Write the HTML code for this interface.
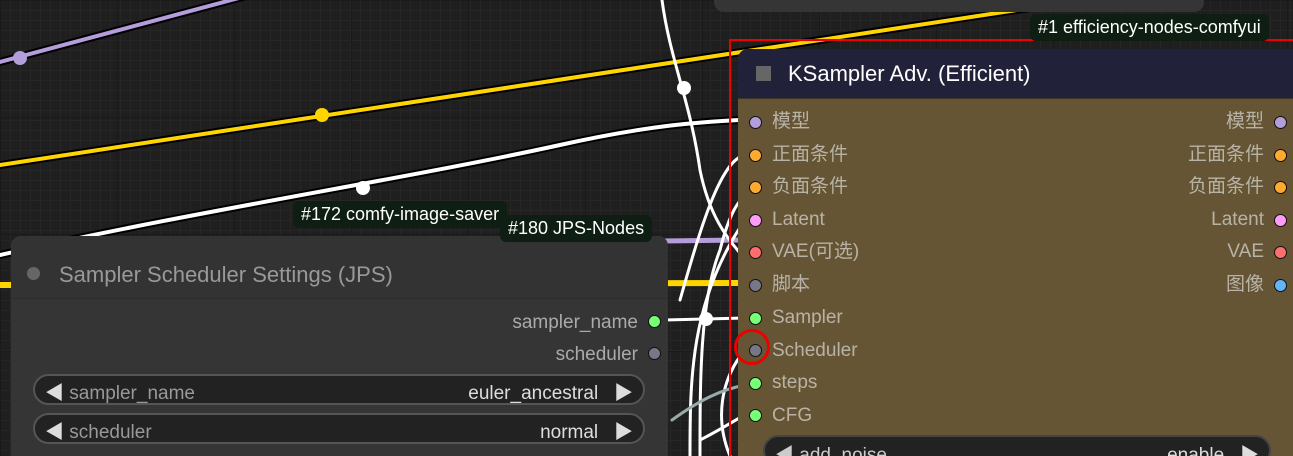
<!DOCTYPE html>
<html style="width:1293px;height:456px;overflow:hidden"><head><meta charset="utf-8"><style>
body{margin:0;width:1293px;height:456px;overflow:hidden;background:#1f1f1f;font-family:"Liberation Sans","Noto Sans CJK SC",sans-serif;position:relative}
.grid{position:absolute;inset:0;background-image:linear-gradient(#181818 1px,transparent 1px),linear-gradient(90deg,#181818 1px,transparent 1px),linear-gradient(#2a2a2a 1px,transparent 1px),linear-gradient(90deg,#2a2a2a 1px,transparent 1px);background-size:117px 117px,117px 117px,10px 10px,10px 10px;opacity:.7}
.abs{position:absolute}
.tag{position:absolute;background:#0f1e12;color:#fff;font-size:18px;padding:3px 8px;border-radius:6px;white-space:nowrap}
.dot{position:absolute;width:11px;height:11px;border-radius:50%;border:1px solid #111}
.lbl{position:absolute;color:#b8b3a6;font-size:19px;line-height:22px}
.w{position:absolute;height:31px;border:2px solid #555;border-radius:16px;background:#222;color:#999;font-size:19px;box-sizing:border-box}
</style></head><body>
<div class="grid"></div>
<svg class="abs" width="1293" height="456" style="left:0;top:0">
<g fill="none" stroke-linecap="round">
<path d="M0 62 L250 -5" stroke="#000" stroke-width="8"/><path d="M0 62 L250 -5" stroke="#b39ddb" stroke-width="4"/>
<path d="M0 165 L1030 8" stroke="#000" stroke-width="8"/><path d="M0 165 L1030 8" stroke="#ffd500" stroke-width="4"/>
<path d="M0 255 C200 210 400 180 560 145 C650 125 700 122 740 120" stroke="#000" stroke-width="8"/><path d="M0 255 C200 210 400 180 560 145 C650 125 700 122 740 120" stroke="#fff" stroke-width="4"/>
<path d="M0 285 L740 283" stroke="#ffd500" stroke-width="6"/>
<path d="M520 243 L740 240" stroke="#b39ddb" stroke-width="5"/>
<g stroke="#fff" stroke-width="3">
<path d="M662 0 C670 60 690 100 700 170 C712 230 740 250 745 260"/>
<path d="M700 456 C700 380 700 300 720 250 C730 210 740 200 745 195"/>
<path d="M680 300 C700 230 720 160 745 155"/>
<path d="M690 456 C690 380 690 300 745 220"/>
<path d="M665 320 L745 318"/>
<path d="M730 456 C715 420 720 380 745 350"/>
<path d="M700 440 C720 430 735 420 745 415"/>
</g>
<path d="M672 420 C700 400 720 390 745 385" stroke="#9aa" stroke-width="3"/>
</g>
<circle cx="20" cy="58" r="7" fill="#b39ddb"/><circle cx="322" cy="115" r="7" fill="#ffd500"/>
<circle cx="363" cy="188" r="7" fill="#fff"/><circle cx="684" cy="88" r="7" fill="#fff"/><circle cx="706" cy="319" r="7" fill="#fff"/>
</svg>
<div class="abs" style="left:714px;top:-20px;width:490px;height:32px;background:#353535;border-radius:10px"></div>
<div class="abs" style="left:729px;top:39px;width:580px;height:430px;border:2px solid #e00;box-sizing:border-box"></div>
<div class="abs" style="left:738px;top:49px;width:555px;height:407px;background:#655535;border-radius:10px 0 0 0;overflow:hidden">
<div style="height:49px;background:#22213a;border-bottom:1px solid #3a3528"></div>
</div>
<div class="abs" style="left:756px;top:66px;width:15px;height:15px;background:#666"></div>
<div class="abs" style="left:788px;top:61px;color:#fff;font-size:22px">KSampler Adv. (Efficient)</div>
<div class="tag" style="left:1030px;top:14px">#1 efficiency-nodes-comfyui</div>
<div class="dot" style="left:749px;top:116px;background:#b39ddb"></div><div class="lbl" style="left:772px;top:111px">模型</div>
<div class="dot" style="left:749px;top:149px;background:#ffa931"></div><div class="lbl" style="left:772px;top:144px">正面条件</div>
<div class="dot" style="left:749px;top:181px;background:#ffa931"></div><div class="lbl" style="left:772px;top:176px">负面条件</div>
<div class="dot" style="left:749px;top:214px;background:#ff9cf9"></div><div class="lbl" style="left:772px;top:209px">Latent</div>
<div class="dot" style="left:749px;top:246px;background:#ff6e6e"></div><div class="lbl" style="left:772px;top:241px">VAE(可选)</div>
<div class="dot" style="left:749px;top:279px;background:#778"></div><div class="lbl" style="left:772px;top:274px">脚本</div>
<div class="dot" style="left:749px;top:312px;background:#7f7"></div><div class="lbl" style="left:772px;top:307px">Sampler</div>
<div class="dot" style="left:749px;top:344px;background:#778"></div><div class="lbl" style="left:772px;top:340px">Scheduler</div>
<div class="abs" style="left:734px;top:329px;width:36px;height:36px;border:3px solid #e00;border-radius:50%;box-sizing:border-box"></div>
<div class="dot" style="left:749px;top:377px;background:#7f7"></div><div class="lbl" style="left:772px;top:372px">steps</div>
<div class="dot" style="left:749px;top:409px;background:#7f7"></div><div class="lbl" style="left:772px;top:405px">CFG</div>
<div class="lbl" style="right:29px;top:111px">模型</div><div class="dot" style="left:1274px;top:116px;background:#b39ddb"></div>
<div class="lbl" style="right:29px;top:144px">正面条件</div><div class="dot" style="left:1274px;top:149px;background:#ffa931"></div>
<div class="lbl" style="right:29px;top:176px">负面条件</div><div class="dot" style="left:1274px;top:181px;background:#ffa931"></div>
<div class="lbl" style="right:29px;top:209px">Latent</div><div class="dot" style="left:1274px;top:214px;background:#ff9cf9"></div>
<div class="lbl" style="right:29px;top:241px">VAE</div><div class="dot" style="left:1274px;top:246px;background:#ff6e6e"></div>
<div class="lbl" style="right:29px;top:274px">图像</div><div class="dot" style="left:1274px;top:279px;background:#64b5f6"></div>
<div class="w" style="left:763px;top:435px;width:508px;border-color:#444"><span style="position:absolute;left:10px;top:3px;color:#ccc">◀ add_noise</span><span style="position:absolute;right:10px;top:3px;color:#ddd">enable &nbsp;&nbsp;▶</span></div>
<div class="abs" style="left:11px;top:236px;width:657px;height:220px;background:#353535;border-radius:10px 10px 0 0"><div style="height:62px;background:#333;border-bottom:1px solid #2c2c2c;border-radius:10px 10px 0 0"></div></div>
<div class="abs" style="left:27px;top:267px;width:13px;height:13px;border-radius:50%;background:#666"></div>
<div class="abs" style="left:59px;top:262px;color:#999;font-size:22px">Sampler Scheduler Settings (JPS)</div>
<div class="lbl" style="right:655px;top:312px;color:#aaa">sampler_name</div><div class="dot" style="left:648px;top:315px;background:#7f7"></div>
<div class="lbl" style="right:655px;top:344px;color:#aaa">scheduler</div><div class="dot" style="left:648px;top:347px;background:#778"></div>
<div class="w" style="left:33px;top:374px;width:612px"><span style="position:absolute;left:10px;top:2px"><span style="color:#ddd">◀</span> sampler_name</span><span style="position:absolute;right:10px;top:2px;color:#ddd">euler_ancestral &nbsp;&nbsp;▶</span></div>
<div class="w" style="left:33px;top:413px;width:612px"><span style="position:absolute;left:10px;top:2px"><span style="color:#ddd">◀</span> scheduler</span><span style="position:absolute;right:10px;top:2px;color:#ddd">normal &nbsp;&nbsp;▶</span></div>
<div class="tag" style="left:293px;top:201px">#172 comfy-image-saver</div>
<div class="tag" style="left:500px;top:215px">#180 JPS-Nodes</div>
</body></html>
